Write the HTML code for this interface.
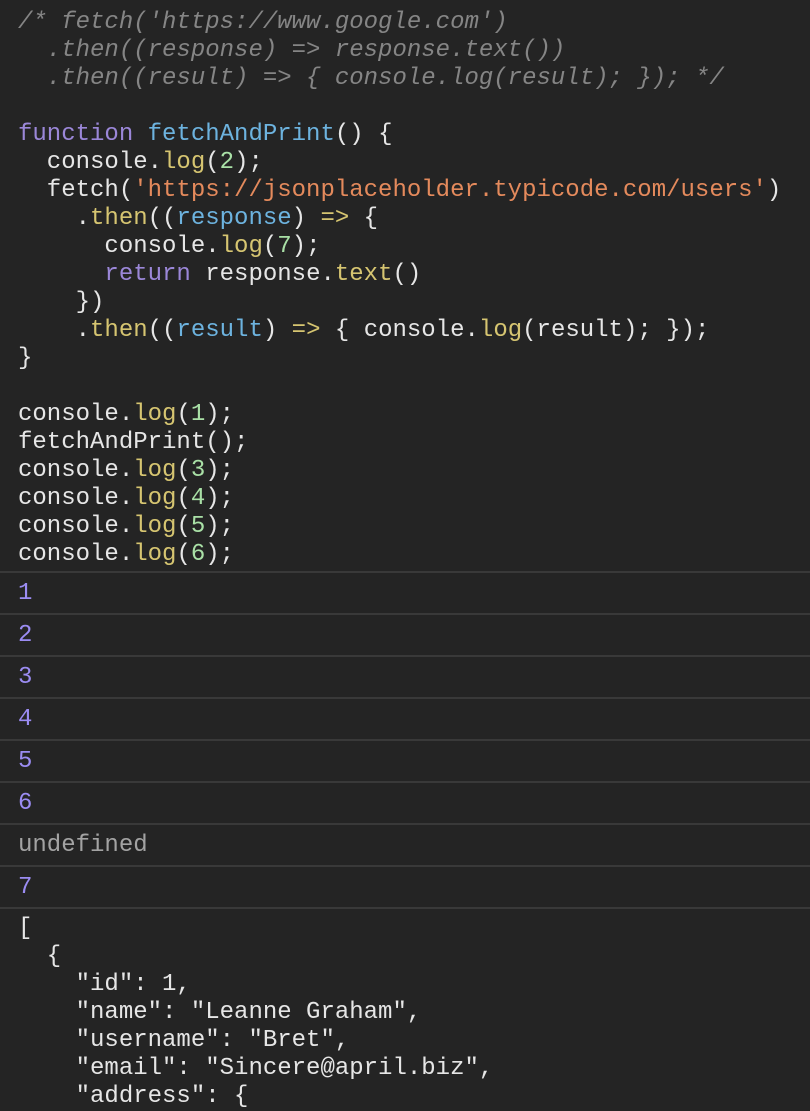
<!DOCTYPE html>
<html><head><style>
body{margin:0;background:#242424;width:810px;height:1104px;overflow:hidden;font-family:"Liberation Mono",monospace;font-size:24px;color:#e6e6e6}
pre{margin:0;font:inherit;line-height:28px;white-space:pre}
.code{padding:9px 0 0 18px;height:571px;box-sizing:border-box}
.c{color:#858585;font-style:italic}.k{color:#9b87d8}.f{color:#6db3df}.y{color:#d6c571}.n{color:#a9e0a6}.s{color:#e48a5c}
.row{border-top:2px solid #393939;height:40px;line-height:42px;padding-left:18px;color:#9b8cf2;box-sizing:content-box}
.u{color:#a3a3a3}
.json{border-top:2px solid #393939;padding:6px 0 0 18px}
</style></head><body>
<pre class="code"><span class="c">/* fetch('https://www.google.com')
  .then((response) =&gt; response.text())
  .then((result) =&gt; { console.log(result); }); */</span>

<span class="k">function</span> <span class="f">fetchAndPrint</span>() {
  console.<span class="y">log</span>(<span class="n">2</span>);
  fetch(<span class="s">'https://jsonplaceholder.typicode.com/users'</span>)
    .<span class="y">then</span>((<span class="f">response</span>) <span class="y">=&gt;</span> {
      console.<span class="y">log</span>(<span class="n">7</span>);
      <span class="k">return</span> response.<span class="y">text</span>()
    })
    .<span class="y">then</span>((<span class="f">result</span>) <span class="y">=&gt;</span> { console.<span class="y">log</span>(result); });
}

console.<span class="y">log</span>(<span class="n">1</span>);
fetchAndPrint();
console.<span class="y">log</span>(<span class="n">3</span>);
console.<span class="y">log</span>(<span class="n">4</span>);
console.<span class="y">log</span>(<span class="n">5</span>);
console.<span class="y">log</span>(<span class="n">6</span>);</pre>
<div class="row">1</div>
<div class="row">2</div>
<div class="row">3</div>
<div class="row">4</div>
<div class="row">5</div>
<div class="row">6</div>
<div class="row u">undefined</div>
<div class="row">7</div>
<pre class="json">[
  {
    "id": 1,
    "name": "Leanne Graham",
    "username": "Bret",
    "email": "Sincere@april.biz",
    "address": {</pre>
</body></html>
